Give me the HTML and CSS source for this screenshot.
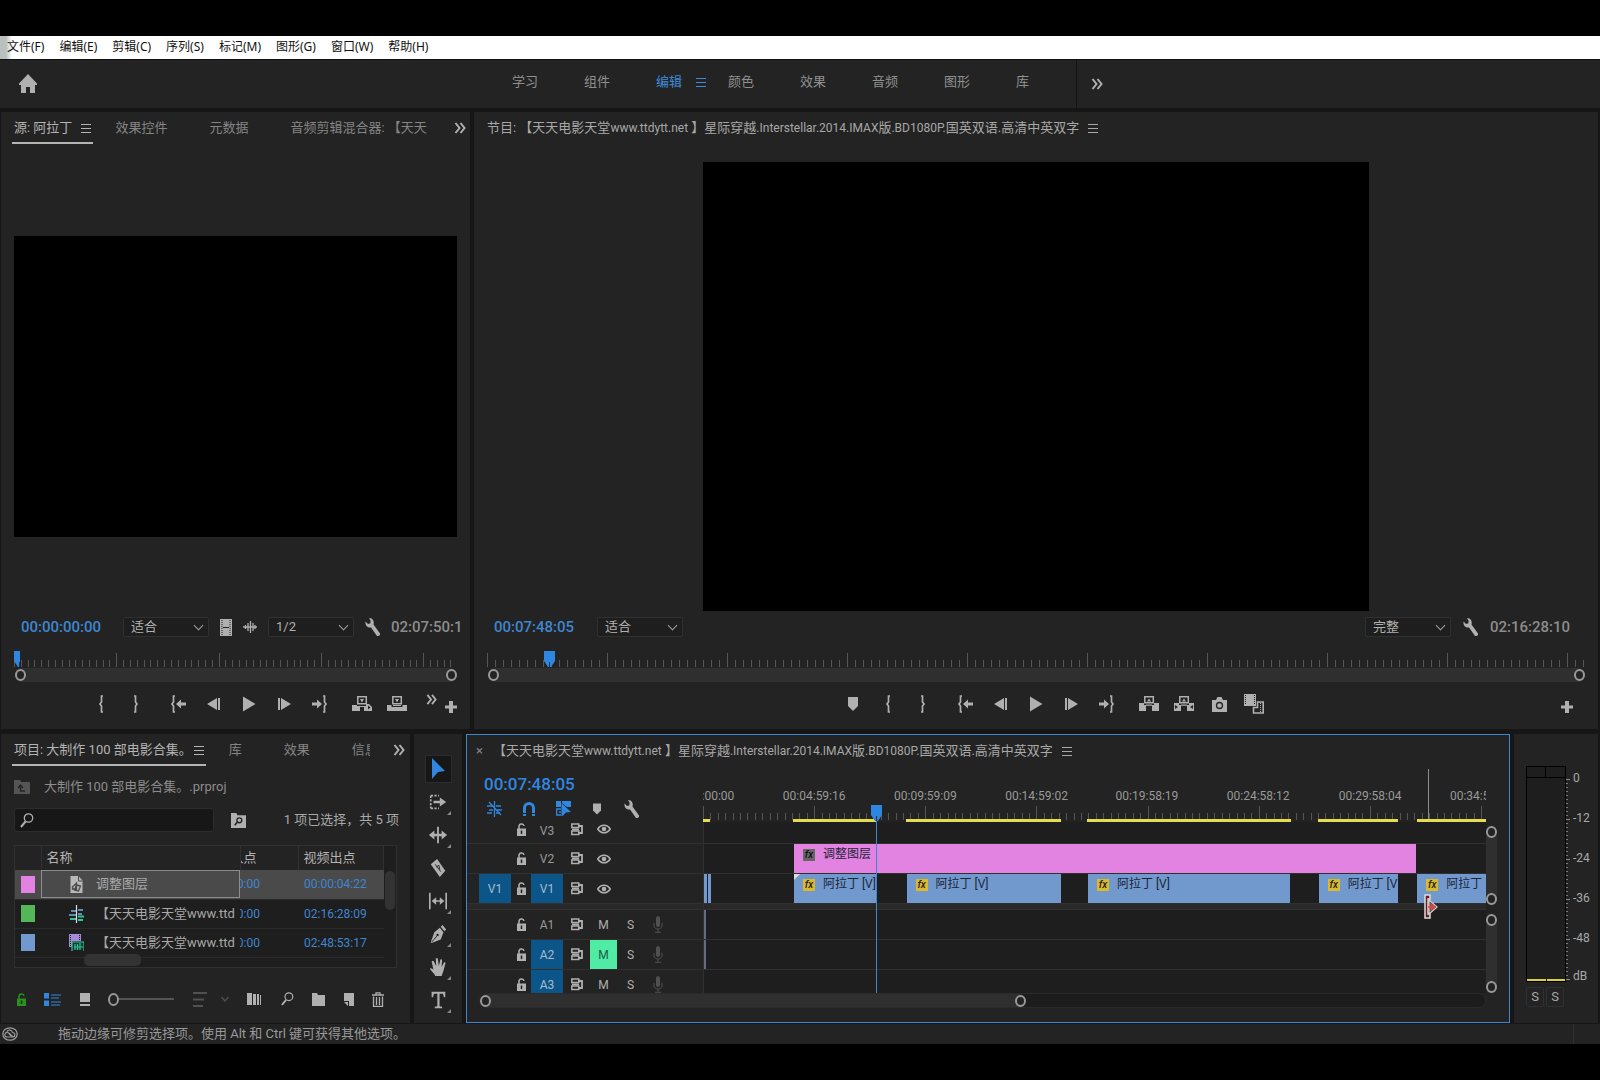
FILE: index.html
```
<!DOCTYPE html>
<html lang="zh-CN">
<head>
  <meta charset="UTF-8">
  <title>Premiere Pro</title>
  <link rel="stylesheet" href="styles.css">
</head>
<body>
<svg class="sprite" aria-hidden="true">
  <symbol id="i-menu" viewBox="0 0 10 11"><path d="M0 1.5h10M0 5.5h10M0 9.5h10" stroke="currentColor"/></symbol>
  <symbol id="i-more" viewBox="0 0 12 12"><path d="M1.5 1l4 5-4 5M6.500 1l4 5-4 5" fill="none" stroke="currentColor" stroke-width="2"/></symbol>
  <symbol id="i-home" viewBox="0 0 18 20"><path d="M9 0l9 9.500v1.500h-2v8h-5v-6H7v6H2v-8H0V9.500z" fill="currentColor"/></symbol>
  <symbol id="i-film" viewBox="0 0 12 17"><path d="M0 0h12v17H0z" fill="currentColor"/><path d="M2 1v15M10 1v15" stroke="#222" stroke-dasharray="1 1"/><path d="M3 8.500h6" stroke="#222"/></symbol>
  <symbol id="i-wave" viewBox="0 0 14 12"><path d="M0 6h14M2.500 4v4M5 2v8M7.500 0v12M10 2v8M12 4v4" stroke="currentColor" stroke-width="1.300"/></symbol>
  <symbol id="i-wrench" viewBox="0 0 15 18"><path d="M4 0C8 0 9.500 3.500 8.500 6.500L15 15.500V17l-1.500 1H12L6 9.500C2 10 0 7 .5 3.500L3 6l2.500-.8V2.500z" fill="currentColor"/></symbol>
  <symbol id="i-in" viewBox="0 0 18 18"><path d="M11 1H9.500v6L8 9l1.500 2v6H11" fill="none" stroke="currentColor" stroke-width="1.700"/></symbol>
  <symbol id="i-out" viewBox="0 0 18 18"><path d="M7 1h1.500v6L10 9l-1.500 2v6H7" fill="none" stroke="currentColor" stroke-width="1.700"/></symbol>
  <symbol id="i-goin" viewBox="0 0 18 18"><path d="M5 1H3.500v6L2 9l1.500 2v6H5" fill="none" stroke="currentColor" stroke-width="1.700"/><path d="M6 9l5-4.500V7.500h5v3h-5v3z" fill="currentColor"/></symbol>
  <symbol id="i-goout" viewBox="0 0 18 18"><path d="M13 1h1.500v6L16 9l-1.500 2v6H13" fill="none" stroke="currentColor" stroke-width="1.700"/><path d="M12 9L7 4.500V7.500H2v3h5v3z" fill="currentColor"/></symbol>
  <symbol id="i-back" viewBox="0 0 18 18"><path d="M12 3v12L2 9zM13 3h2v12h-2z" fill="currentColor"/></symbol>
  <symbol id="i-fwd" viewBox="0 0 18 18"><path d="M6 3v12l10-6zM3 3h2v12H3z" fill="currentColor"/></symbol>
  <symbol id="i-play" viewBox="0 0 18 18"><path d="M3 1.500v15L15.500 9z" fill="currentColor"/></symbol>
  <symbol id="i-marker" viewBox="0 0 10 14"><path d="M0 0h10v9l-5 5-5-5z" fill="currentColor"/></symbol>
  <symbol id="i-insert" viewBox="0 0 20 16"><path d="M5.800.8h8.500v7H5.800z" fill="none" stroke="currentColor" stroke-width="1.500"/><path d="M8 3h4l-2 3.500zM0 9h5v1h3v5H0zM12 10h2V8h3l3 3v4h-8z" fill="currentColor"/><path d="M16 9.500v4l2.500-2z" fill="#232323"/><path d="M7 10.500h6" stroke="currentColor"/></symbol>
  <symbol id="i-overwrite" viewBox="0 0 20 16"><path d="M5.800.8h8.500v7H5.800z" fill="none" stroke="currentColor" stroke-width="1.500"/><path d="M8 3h4l-2 3.500zM0 9h4.500v2h11V9H20v6H0zM6 9h8v1H6z" fill="currentColor"/></symbol>
  <symbol id="i-lift" viewBox="0 0 20 16"><path d="M5.800.8h8.500v6H5.800z" fill="none" stroke="currentColor" stroke-width="1.500"/><path d="M8 5.500h4L10 2.500zM0 7h5v2h2v6H0zM13 9h2V7h5v8h-7zM7 8.500h6v1.200H7z" fill="currentColor"/></symbol>
  <symbol id="i-extract" viewBox="0 0 20 16"><path d="M5.800.8h8.500v6H5.800z" fill="none" stroke="currentColor" stroke-width="1.500"/><path d="M8 5.500h4L10 2.500zM0 7h5v2h2v6H0zM13 9h2V7h5v8h-7zM7 8.500h6v1.200H7z" fill="currentColor"/><path d="M1 9v4l3-2zM19 9v4l-3-2z" fill="#232323"/></symbol>
  <symbol id="i-camera" viewBox="0 0 15 15"><path d="M0 3h4l1.500-3h4L11 3h4v12H0z" fill="currentColor"/><circle cx="7.500" cy="8.500" r="3" fill="none" stroke="#232323" stroke-width="1.300"/></symbol>
  <symbol id="i-compare" viewBox="0 0 20 20"><path d="M0 0h12v12H0z" fill="currentColor"/><path d="M1.500 1v10M10.500 1v10" stroke="#232323" stroke-dasharray="1 1"/><path d="M13.500 8h5.700v11H9.500v-5.500h4z" fill="none" stroke="currentColor" stroke-width="1.600"/><path d="M16.500 9v9" stroke="currentColor" stroke-dasharray="1 1"/></symbol>
  <symbol id="i-plus" viewBox="0 0 12 14"><path d="M4 1h4v4.500h4v3H8V13H4V8.500H0v-3h4z" fill="currentColor"/></symbol>
  <symbol id="i-upfolder" viewBox="0 0 16 14"><path d="M0 0h6l1 2h9v12H0z" fill="currentColor"/><path d="M4 8l2.500-3L9 8M6.500 6v5H11" fill="none" stroke="#232323" stroke-width="1.400"/></symbol>
  <symbol id="i-search" viewBox="0 0 14 15"><circle cx="8.500" cy="5" r="4.200" fill="none" stroke="currentColor" stroke-width="1.300"/><path d="M5.500 8.500L1 14" stroke="currentColor" stroke-width="2"/></symbol>
  <symbol id="i-findbin" viewBox="0 0 14 14"><path d="M0 0h5l1 2h8v12H0z" fill="currentColor"/><circle cx="7.800" cy="6.800" r="2.300" fill="none" stroke="#232323" stroke-width="1.200"/><path d="M6 8.500L3.500 11.500" stroke="#232323" stroke-width="1.500"/></symbol>
  <symbol id="i-adjust" viewBox="0 0 12 17"><path d="M0 0h8l4 4.500V17H0z" fill="currentColor"/><path d="M8 0v5h4" fill="none" stroke="#4a4a4a"/><path d="M2 11l4-4v6H2zM6 9l4 1-2 5-4-1z" fill="none" stroke="#4a4a4a" stroke-width="1.300"/></symbol>
  <symbol id="i-sequence" viewBox="0 0 15 18"><path d="M2 6h5M0 10h7M9 5h5M9 9h4" stroke="#5b8fb5" stroke-width="2"/><path d="M9 11.500h6M9 15h5M1 14h6" stroke="#36c29a" stroke-width="2"/><path d="M7.500 0v18" stroke="#ddd" stroke-width="1.200"/></symbol>
  <symbol id="i-media" viewBox="0 0 15 17"><path d="M0 0h12v13H0z" fill="#a48ad8"/><path d="M1.500 1v12M10.500 1v6" stroke="#222" stroke-dasharray="1 1"/><path d="M3 7h12v9H3z" fill="#17392c"/><path d="M3 17V8h12v9M5 13h9M6 10v6M8.500 10v6M11 9v7" fill="none" stroke="#36c29a" stroke-width="1.200"/></symbol>
  <symbol id="i-lock" viewBox="0 0 9 13"><path d="M0 5.500h9V13H0z" fill="currentColor"/><path d="M2 6V3.500C2 .5 6.500 0 7 3" fill="none" stroke="currentColor" stroke-width="1.500"/><path d="M4.500 7.500v3.500" stroke="#222" stroke-width="1.500"/></symbol>
  <symbol id="i-list" viewBox="0 0 17 13"><path d="M0 0h5v5.500H0zM0 7.500h5V13H0z" fill="currentColor"/><path d="M7 2h10M7 5h8M7 9h10M7 12h9" stroke="currentColor" stroke-width="1.200"/></symbol>
  <symbol id="i-icons" viewBox="0 0 10 13"><path d="M0 0h10v9H0zM0 11h10v2H0z" fill="currentColor"/></symbol>
  <symbol id="i-sort" viewBox="0 0 14 15"><path d="M0 1h14M0 7.500h11M0 14h10" stroke="currentColor" stroke-width="1.800"/></symbol>
  <symbol id="i-down" viewBox="0 0 8 6"><path d="M.5 1L4 5l3.500-4" fill="none" stroke="currentColor" stroke-width="1.300"/></symbol>
  <symbol id="i-auto" viewBox="0 0 15 12"><path d="M0 0h5v12H0zM6 1h3v11H6zM10 1h2v11h-2zM13 2h1v10h-1z" fill="currentColor"/></symbol>
  <symbol id="i-folder" viewBox="0 0 13 13"><path d="M0 0h5l1 2h7v11H0z" fill="currentColor"/></symbol>
  <symbol id="i-new" viewBox="0 0 10 13"><path d="M0 0h10v13H5V8H0z" fill="currentColor"/><path d="M0 9h4v4z" fill="currentColor"/></symbol>
  <symbol id="i-trash" viewBox="0 0 12 15"><path d="M0 3h12M4 2.500V.8h4v1.700" fill="none" stroke="currentColor" stroke-width="1.300"/><path d="M1.500 4.500v9.800h9V4.500M4.500 5v8M7.500 5v8" fill="none" stroke="currentColor" stroke-width="1.300"/></symbol>
  <symbol id="i-select" viewBox="0 0 20 22"><path d="M4 0l13 13-7 1-6 7z" fill="currentColor"/></symbol>
  <symbol id="i-trackfwd" viewBox="0 0 20 22"><path d="M2 4h9M2 18h9M2 4v14" fill="none" stroke="currentColor" stroke-width="1.800" stroke-dasharray="2.500 1.500"/><path d="M5 9.500h7V6l7 5-7 5v-3.500H5z" fill="currentColor"/></symbol>
  <symbol id="i-ripple" viewBox="0 0 20 22"><path d="M9 2h2v18H9z" fill="currentColor"/><path d="M0 11l6-5v3.500h8V6l6 5-6 5v-3.500H6V16z" fill="currentColor"/></symbol>
  <symbol id="i-razor" viewBox="0 0 20 22"><path d="M2 7l7-6 9 13-6 7z" fill="currentColor"/><path d="M7 7l6 8M8 10l3-2 1 5" stroke="#232323" stroke-width="1" fill="none"/></symbol>
  <symbol id="i-slip" viewBox="0 0 20 22"><path d="M1 2v18M19 2v18M5 11h10" stroke="currentColor" stroke-width="1.800"/><path d="M3 11l5-4v8zM17 11l-5-4v8z" fill="currentColor"/></symbol>
  <symbol id="i-pen" viewBox="0 0 20 22"><path d="M12 4l4 5-3 8-10 4-1-1L6 9zM13 3l2-2 4 5-2 2z" fill="currentColor"/><path d="M3 20l6-7" stroke="#232323"/><circle cx="9.500" cy="12" r="1.300" fill="#232323"/></symbol>
  <symbol id="i-hand" viewBox="0 0 20 22"><path d="M7 21c-1-3-4-5-6-8 1-1.500 3 0 4 1L3 5c1-1.500 2-1 2.500 0L8 10 7.500 2c1-1.500 2-1 2.300 0L11 10l1.500-7c1-1 2-.5 2 .5L14 11l2.500-5c1-.7 2 0 1.700 1L16 15l-2 6z" fill="currentColor"/></symbol>
  <symbol id="i-type" viewBox="0 0 20 22"><path d="M3 2h15v6h-1.500l-1-4H11.700v14l2.800.5V20h-8v-1.500l2.800-.5V4H5.500l-1 4H3z" fill="currentColor"/></symbol>
  <symbol id="i-nest" viewBox="0 0 16 16"><path d="M0 5h6M2 9h4M0 12h5M9 5h5M10 9h5M9 12h4" stroke="currentColor" stroke-width="1.700"/><path d="M7.500 0v16M2 1l12 13" stroke="currentColor" stroke-width="1.300"/></symbol>
  <symbol id="i-magnet" viewBox="0 0 12 14"><path d="M1.500 14V6c0-6 9-6 9 0v8" fill="none" stroke="currentColor" stroke-width="3"/><path d="M0 11.500h4M8 11.500h4" stroke="#232323"/></symbol>
  <symbol id="i-linked" viewBox="0 0 15 15"><path d="M0 0h5v6H0zM6 0h9v6h-4L6 2z" fill="currentColor"/><path d="M5 8H.7v6H5M3 11h2" fill="none" stroke="currentColor" stroke-width="1.300"/><path d="M5.500 2L15 11l-5 .5L5.500 16z" fill="currentColor"/></symbol>
  <symbol id="i-sync" viewBox="0 0 12 13"><path d="M.8 1h7v3.500h-7zM.8 8h7v3.500h-7z" fill="none" stroke="currentColor" stroke-width="1.500"/><path d="M7 3h4v7H7M1 6.300h7" fill="none" stroke="currentColor" stroke-width="1.800"/></symbol>
  <symbol id="i-eye" viewBox="0 0 14 10"><path d="M.8 5C4 0 10 0 13.200 5 10 10 4 10 .8 5z" fill="none" stroke="currentColor" stroke-width="1.700"/><circle cx="7" cy="5" r="2.300" fill="currentColor"/></symbol>
  <symbol id="i-mic" viewBox="0 0 10 17"><path d="M3 2c0-2.500 4-2.500 4 0v7c0 2.500-4 2.500-4 0z" fill="currentColor"/><path d="M1 7v3c0 4 8 4 8 0V7M5 13v3M2 16.300h6" fill="none" stroke="currentColor"/></symbol>
  <symbol id="i-cc" viewBox="0 0 16 14"><ellipse cx="8" cy="7" rx="7.200" ry="6.200" fill="none" stroke="currentColor" stroke-width="1.300"/><path d="M11 10H5.500c-4 0-3-5 0-4.500 1.500.2 2 2 3.500 3.500M5 5c1-3 5-2 5.500.5 3 0 3 4 .5 4.500L7 6" fill="none" stroke="currentColor" stroke-width="1.200"/></symbol>
  <symbol id="i-head" viewBox="0 0 11 16"><path d="M0 0h11v10l-4 6H4l-4-6z" fill="#2f86e0"/><path d="M5.500 11v5" stroke="#16324f"/></symbol>
</svg>

<nav class="menubar">
  <a href="#">文件(F)</a>
  <a href="#">编辑(E)</a>
  <a href="#">剪辑(C)</a>
  <a href="#">序列(S)</a>
  <a href="#">标记(M)</a>
  <a href="#">图形(G)</a>
  <a href="#">窗口(W)</a>
  <a href="#">帮助(H)</a>
</nav>

<header class="workspaces">
  <button class="home" aria-label="主页"><svg width="18" height="20"><use href="#i-home"/></svg></button>
  <nav class="workspace-tabs">
    <button>学习</button>
    <button>组件</button>
    <button class="active">编辑 <svg width="10" height="11"><use href="#i-menu"/></svg></button>
    <button>颜色</button>
    <button>效果</button>
    <button>音频</button>
    <button>图形</button>
    <button>库</button>
  </nav>
  <button class="overflow" aria-label="更多工作区"><svg width="12" height="12"><use href="#i-more"/></svg></button>
</header>

<main>
  <div class="row monitors">
    <section class="panel monitor source">
      <div class="tabs">
        <button class="tab active">源: 阿拉丁 <svg width="10" height="11"><use href="#i-menu"/></svg></button>
        <button class="tab">效果控件</button>
        <button class="tab">元数据</button>
        <button class="tab clipped">音频剪辑混合器: 【天天</button>
        <button class="more" aria-label="更多"><svg width="12" height="12"><use href="#i-more"/></svg></button>
      </div>
      <div class="preview"><div class="video"></div></div>
      <div class="controls">
        <span class="timecode">00:00:00:00</span>
        <span class="select"><select aria-label="缩放级别"><option>适合</option></select></span>
        <svg width="12" height="17"><use href="#i-film"/></svg>
        <svg width="14" height="12"><use href="#i-wave"/></svg>
        <span class="select"><select aria-label="回放分辨率"><option>1/2</option></select></span>
        <svg width="15" height="18"><use href="#i-wrench"/></svg>
        <span class="duration">02:07:50:1</span>
      </div>
      <div class="scrub">
        <svg class="ruler" data-step="6.820"></svg>
        <svg class="playhead" width="11" height="16" style="left: 0"><use href="#i-head"/></svg>
      </div>
      <div class="zoombar"><i></i><i></i></div>
      <div class="transport">
        <div class="buttons">
          <div>
            <button aria-label="标记入点"><svg width="18" height="18"><use href="#i-in"/></svg></button>
            <button aria-label="标记出点"><svg width="18" height="18"><use href="#i-out"/></svg></button>
          </div>
          <div>
            <button aria-label="转到入点"><svg width="18" height="18"><use href="#i-goin"/></svg></button>
            <button aria-label="后退一帧"><svg width="18" height="18"><use href="#i-back"/></svg></button>
            <button aria-label="播放"><svg width="18" height="18"><use href="#i-play"/></svg></button>
            <button aria-label="前进一帧"><svg width="18" height="18"><use href="#i-fwd"/></svg></button>
            <button aria-label="转到出点"><svg width="18" height="18"><use href="#i-goout"/></svg></button>
          </div>
          <div>
            <button aria-label="插入"><svg width="20" height="16"><use href="#i-insert"/></svg></button>
            <button aria-label="覆盖"><svg width="20" height="16"><use href="#i-overwrite"/></svg></button>
          </div>
        </div>
        <div class="extra">
          <button aria-label="更多按钮"><svg width="11" height="11"><use href="#i-more"/></svg></button>
          <button class="add" aria-label="按钮编辑器"><svg width="12" height="14"><use href="#i-plus"/></svg></button>
        </div>
      </div>
    </section>

    <section class="panel monitor program">
      <div class="tabs">
        <button class="tab title"><span>节目: 【天天电影天堂<small>www.ttdytt.net</small> 】星际穿越<small>.Interstellar.2014.IMAX</small>版<small>.BD1080P.</small>国英双语.高清中英双字</span><svg width="10" height="11"><use href="#i-menu"/></svg></button>
      </div>
      <div class="preview"><div class="video"></div></div>
      <div class="controls">
        <span class="timecode">00:07:48:05</span>
        <span class="select"><select aria-label="缩放级别"><option>适合</option></select></span>
        <span class="select push"><select aria-label="回放分辨率"><option>完整</option></select></span>
        <svg width="15" height="18"><use href="#i-wrench"/></svg>
        <span class="duration">02:16:28:10</span>
      </div>
      <div class="scrub">
        <svg class="ruler" data-step="8"></svg>
        <svg class="playhead" width="11" height="16" style="left: 5.200%"><use href="#i-head"/></svg>
      </div>
      <div class="zoombar"><i></i><i></i></div>
      <div class="transport">
        <div class="buttons">
          <div>
            <button aria-label="添加标记"><svg width="10" height="14"><use href="#i-marker"/></svg></button>
            <button aria-label="标记入点"><svg width="18" height="18"><use href="#i-in"/></svg></button>
            <button aria-label="标记出点"><svg width="18" height="18"><use href="#i-out"/></svg></button>
          </div>
          <div>
            <button aria-label="转到入点"><svg width="18" height="18"><use href="#i-goin"/></svg></button>
            <button aria-label="后退一帧"><svg width="18" height="18"><use href="#i-back"/></svg></button>
            <button aria-label="播放"><svg width="18" height="18"><use href="#i-play"/></svg></button>
            <button aria-label="前进一帧"><svg width="18" height="18"><use href="#i-fwd"/></svg></button>
            <button aria-label="转到出点"><svg width="18" height="18"><use href="#i-goout"/></svg></button>
          </div>
          <div>
            <button aria-label="提升"><svg width="20" height="16"><use href="#i-lift"/></svg></button>
            <button aria-label="提取"><svg width="20" height="16"><use href="#i-extract"/></svg></button>
            <button aria-label="导出帧"><svg width="15" height="15"><use href="#i-camera"/></svg></button>
            <button aria-label="比较视图"><svg width="20" height="20"><use href="#i-compare"/></svg></button>
          </div>
        </div>
        <div class="extra">
          <button class="add" aria-label="按钮编辑器"><svg width="12" height="14"><use href="#i-plus"/></svg></button>
        </div>
      </div>
    </section>
  </div>

  <div class="row editing">
    <section class="panel project">
      <div class="tabs">
        <button class="tab active">项目: 大制作 100 部电影合集。<svg width="10" height="11"><use href="#i-menu"/></svg></button>
        <button class="tab">库</button>
        <button class="tab">效果</button>
        <button class="tab clipped">信息</button>
        <button class="more" aria-label="更多"><svg width="12" height="12"><use href="#i-more"/></svg></button>
      </div>
      <div class="path"><svg width="16" height="14"><use href="#i-upfolder"/></svg>大制作 100 部电影合集。.prproj</div>
      <div class="filter">
        <label class="search">
          <svg width="14" height="15"><use href="#i-search"/></svg>
          <input type="text" aria-label="搜索">
        </label>
        <button aria-label="从查询创建新的搜索素材箱"><svg width="15" height="15"><use href="#i-findbin"/></svg></button>
        <span>1 项已选择，共 5 项</span>
      </div>
      <div class="bin">
        <table>
          <thead>
            <tr><th class="label"></th><th class="name">名称</th><th class="in"><div>入点</div></th><th>视频出点</th></tr>
          </thead>
          <tbody>
            <tr class="selected">
              <td><span class="swatch pink"></span></td>
              <td class="name"><div><svg width="15" height="17"><use href="#i-adjust"/></svg>调整图层</div></td>
              <td class="in"><div>00:00</div></td>
              <td class="tc">00:00:04:22</td>
            </tr>
            <tr>
              <td><span class="swatch green"></span></td>
              <td class="name"><div><svg width="15" height="18"><use href="#i-sequence"/></svg>【天天电影天堂www.ttd</div></td>
              <td class="in"><div>00:00</div></td>
              <td class="tc">02:16:28:09</td>
            </tr>
            <tr>
              <td><span class="swatch blue"></span></td>
              <td class="name"><div><svg width="15" height="17"><use href="#i-media"/></svg>【天天电影天堂www.ttd</div></td>
              <td class="in"><div>00:00</div></td>
              <td class="tc">02:48:53:17</td>
            </tr>
          </tbody>
        </table>
        <span class="vthumb"></span>
        <span class="hthumb"></span>
      </div>
      <div class="project-tools">
        <button class="lock" aria-label="可写"><svg width="9" height="13"><use href="#i-lock"/></svg></button>
        <button class="on" aria-label="列表视图"><svg width="17" height="13"><use href="#i-list"/></svg></button>
        <button aria-label="图标视图"><svg width="10" height="13"><use href="#i-icons"/></svg></button>
        <input type="range" min="0" max="100" value="0" aria-label="缩略图大小">
        <button class="dim" aria-label="排序"><svg width="14" height="15"><use href="#i-sort"/></svg><svg width="8" height="6"><use href="#i-down"/></svg></button>
        <button aria-label="自动匹配序列"><svg width="15" height="12"><use href="#i-auto"/></svg></button>
        <button aria-label="查找"><svg width="13" height="14"><use href="#i-search"/></svg></button>
        <button aria-label="新建素材箱"><svg width="13" height="13"><use href="#i-folder"/></svg></button>
        <button aria-label="新建项"><svg width="10" height="13"><use href="#i-new"/></svg></button>
        <button aria-label="清除"><svg width="12" height="15"><use href="#i-trash"/></svg></button>
      </div>
    </section>

    <section class="panel tools">
      <button class="active" aria-label="选择工具"><svg width="20" height="22"><use href="#i-select"/></svg></button>
      <button class="group" aria-label="向前选择轨道工具"><svg width="20" height="20"><use href="#i-trackfwd"/></svg></button>
      <button class="group" aria-label="波纹编辑工具"><svg width="20" height="20"><use href="#i-ripple"/></svg></button>
      <button aria-label="剃刀工具"><svg width="20" height="20"><use href="#i-razor"/></svg></button>
      <button class="group" aria-label="外滑工具"><svg width="20" height="20"><use href="#i-slip"/></svg></button>
      <button class="group" aria-label="钢笔工具"><svg width="20" height="20"><use href="#i-pen"/></svg></button>
      <button class="group" aria-label="手形工具"><svg width="20" height="20"><use href="#i-hand"/></svg></button>
      <button class="group" aria-label="文字工具"><svg width="20" height="20"><use href="#i-type"/></svg></button>
    </section>

    <section class="panel timeline">
      <div class="tabs">
        <button class="close" aria-label="关闭">×</button>
        <button class="tab title"><span>【天天电影天堂<small>www.ttdytt.net</small> 】星际穿越<small>.Interstellar.2014.IMAX</small>版<small>.BD1080P.</small>国英双语.高清中英双字</span><svg width="10" height="11"><use href="#i-menu"/></svg></button>
      </div>
      <div class="tracks">
        <div class="track-head">
          <span class="timecode">00:07:48:05</span>
          <div class="switches">
            <button class="on" aria-label="嵌套"><svg width="16" height="16"><use href="#i-nest"/></svg></button>
            <button class="on" aria-label="对齐"><svg width="12" height="14"><use href="#i-magnet"/></svg></button>
            <button class="on" aria-label="链接选择项"><svg width="15" height="15"><use href="#i-linked"/></svg></button>
            <button aria-label="添加标记"><svg width="8" height="12"><use href="#i-marker"/></svg></button>
            <button aria-label="时间轴显示设置"><svg width="15" height="18"><use href="#i-wrench"/></svg></button>
          </div>
        </div>
        <div class="time-ruler">
          <svg class="ruler" data-step="7.410"></svg>
          <span style="left: 0%">00:00:00:00</span>
          <span style="left: 14.200%">00:04:59:16</span>
          <span style="left: 28.400%">00:09:59:09</span>
          <span style="left: 42.600%">00:14:59:02</span>
          <span style="left: 56.700%">00:19:58:19</span>
          <span style="left: 70.900%">00:24:58:12</span>
          <span style="left: 85.200%">00:29:58:04</span>
          <span style="left: 99.400%">00:34:57:22</span>
          <i class="render" style="left: 0%; width: 0.900%"></i>
          <i class="render" style="left: 11.500%; width: 10.600%"></i>
          <i class="render" style="left: 25.900%; width: 19.800%"></i>
          <i class="render" style="left: 49.100%; width: 26%"></i>
          <i class="render" style="left: 78.600%; width: 10.200%"></i>
          <i class="render" style="left: 91.200%; width: 8.800%"></i>
          <i class="hover" style="left: 92.600%"></i>
        </div>
        <div class="heads">
          <div class="head partial">
            <span></span><svg width="9" height="13"><use href="#i-lock"/></svg><b>V3</b><svg width="12" height="13"><use href="#i-sync"/></svg><svg width="14" height="10"><use href="#i-eye"/></svg>
          </div>
          <div class="head">
            <span></span><svg width="9" height="13"><use href="#i-lock"/></svg><b>V2</b><svg width="12" height="13"><use href="#i-sync"/></svg><svg width="14" height="10"><use href="#i-eye"/></svg>
          </div>
          <div class="head">
            <b class="on">V1</b><svg width="9" height="13"><use href="#i-lock"/></svg><b class="on">V1</b><svg width="12" height="13"><use href="#i-sync"/></svg><svg width="14" height="10"><use href="#i-eye"/></svg>
          </div>
          <div class="split"></div>
          <div class="head">
            <span></span><svg width="9" height="13"><use href="#i-lock"/></svg><b>A1</b><svg width="12" height="13"><use href="#i-sync"/></svg><button>M</button><button>S</button><svg class="mic" width="10" height="17"><use href="#i-mic"/></svg>
          </div>
          <div class="head">
            <span></span><svg width="9" height="13"><use href="#i-lock"/></svg><b class="on">A2</b><svg width="12" height="13"><use href="#i-sync"/></svg><button class="muted">M</button><button>S</button><svg class="mic" width="10" height="17"><use href="#i-mic"/></svg>
          </div>
          <div class="head cut">
            <span></span><svg width="9" height="13"><use href="#i-lock"/></svg><b class="on">A3</b><svg width="12" height="13"><use href="#i-sync"/></svg><button>M</button><button>S</button><svg class="mic" width="10" height="17"><use href="#i-mic"/></svg>
          </div>
        </div>
        <div class="lanes">
          <div class="lane partial"></div>
          <div class="lane">
            <div class="clip pink" style="left: 11.500%; width: 79.600%"><em>fx</em>调整图层</div>
          </div>
          <div class="lane">
            <div class="clip sliver" style="left: 0%; width: 0.900%"></div>
            <div class="clip fade" style="left: 11.500%; width: 10.500%"><em>fx</em>阿拉丁 [V]</div>
            <div class="clip" style="left: 25.900%; width: 19.700%"><em>fx</em>阿拉丁 [V]</div>
            <div class="clip" style="left: 49.100%; width: 25.900%"><em>fx</em>阿拉丁 [V]</div>
            <div class="clip" style="left: 78.600%; width: 10.100%"><em>fx</em>阿拉丁 [V</div>
            <div class="clip" style="left: 91.200%; width: 8.800%"><em>fx</em>阿拉丁</div>
          </div>
          <div class="split"></div>
          <div class="lane"><div class="clip audio" style="left: 0%; width: 0.300%"></div></div>
          <div class="lane"><div class="clip audio" style="left: 0%; width: 0.300%"></div></div>
          <div class="lane cut"></div>
        </div>
        <div class="vbars">
          <div class="vbar"><i></i><i></i></div>
          <div class="vbar"><i></i><i></i></div>
        </div>
        <div class="overlay">
          <div class="playline" style="left: 22%"><svg width="11" height="16"><use href="#i-head"/></svg></div>
          <svg class="cursor" width="16" height="28" viewBox="0 0 16 28" style="left: 92%"><path d="M2 2h5v4H5v15h2v4H2z" fill="#6b1d1d" stroke="#ddd" stroke-width="1.500"/><path d="M6 7l8 7-8 7z" fill="#333" stroke="#ccc" stroke-width="1.300"/><path d="M5 14h6M8 11l4 3-4 3z" stroke="#d34a4a" fill="#d34a4a" stroke-width="1.500"/></svg>
        </div>
      </div>
      <div class="hbar"><div style="width: 54.300%"><i></i><i></i></div></div>
    </section>

    <section class="panel meters">
      <div class="meter"><i></i><i></i></div>
      <div class="scale">
        <span>0</span><span>-12</span><span>-24</span><span>-36</span><span>-48</span><span>dB</span>
      </div>
      <div class="solo"><button>S</button><button>S</button></div>
    </section>
  </div>
</main>

<footer class="status">
  <svg width="16" height="14"><use href="#i-cc"/></svg>
  <span>拖动边缘可修剪选择项。使用 Alt 和 Ctrl 键可获得其他选项。</span>
</footer>

<script>
  // draw the ruler ticks, one long tick in every fifteen
  document.querySelectorAll('.ruler').forEach(ruler => {
    const width = ruler.clientWidth;
    const height = ruler.clientHeight;
    const step = Number(ruler.dataset.step);
    let d = '';
    for (let i = 0; i * step < width; i++) {
      const x = Math.round(i * step) + 0.5;
      d += 'M' + x + ' ' + height + 'v' + (i % 15 === 0 ? -14 : -7);
    }
    const path = document.createElementNS('http://www.w3.org/2000/svg', 'path');
    path.setAttribute('d', d);
    path.setAttribute('stroke', '#555');
    ruler.appendChild(path);
  });
</script>
</body>
</html>
```
FILE: styles.css
```
* {
  box-sizing: border-box;
}

body {
  margin: 0;
  padding: 36px 0;
  min-height: 100vh;
  display: flex;
  flex-direction: column;
  background: #000;
  color: #a8a8a8;
  font-family: Roboto, "Noto Sans CJK SC", sans-serif;
  font-size: 13px;
  line-height: 18px;
}

button, input, select {
  font: inherit;
  color: inherit;
  background: none;
  border: 0;
  padding: 0;
  margin: 0;
}

button {
  display: flex;
  align-items: center;
  justify-content: center;
  white-space: nowrap;
}

svg {
  display: block;
  flex: none;
}

.sprite {
  position: absolute;
  width: 0;
  height: 0;
}

/* menu and workspaces */

.menubar {
  display: flex;
  align-items: center;
  gap: 15px;
  height: 23px;
  padding: 0 0 2px 7px;
  background: linear-gradient(90deg, #b9c0bd 6px, #fff 12px);
  font-family: "Noto Sans", "Noto Sans CJK SC", sans-serif;
  font-size: 12px;
}

.menubar a {
  color: #111;
  text-decoration: none;
}

.workspaces {
  display: grid;
  grid-template-columns: 1fr auto 1fr;
  align-items: center;
  height: 49px;
  padding: 0 11px 2px 0;
  background: #232323;
  border-top: 1px solid #111;
  color: #8f8f8f;
}

.home {
  justify-self: start;
  margin-left: 19px;
  color: #b0b0b0;
}

.workspace-tabs {
  display: flex;
  border-right: 1px solid #141414;
  height: 48px;
}

.workspace-tabs button {
  width: 72px;
  justify-content: flex-start;
  gap: 14px;
  padding-bottom: 4px;
}

.workspace-tabs button:last-child {
  width: 60px;
}

.workspace-tabs .active {
  color: #3f8ad8;
}

.overflow {
  justify-self: start;
  margin-left: 14px;
  color: #b0b0b0;
}

/* panels */

main {
  flex: 1;
  display: flex;
  flex-direction: column;
  gap: 5px;
  padding: 4px 2px 1px 1px;
  background: #161616;
}

.row {
  display: grid;
  gap: 4px;
}

.monitors {
  flex: 1;
  grid-template-columns: minmax(0, 469fr) minmax(0, 1124fr);
}

.editing {
  grid-template-columns: minmax(0, 409fr) 48px minmax(0, 1044fr) 84px;
}

.panel {
  background: #232323;
  min-width: 0;
}

.tabs {
  display: flex;
  align-items: center;
  height: 32px;
  color: #858585;
}

.tab {
  height: 32px;
}

.tab svg {
  margin-left: 9px;
}

.tab.title {
  color: #a8a8a8;
}

.tab small {
  font-size: 12px;
}

.tab.active {
  color: #b4b4b4;
  border-bottom: 2px solid #b4b4b4;
  padding: 2px 2px 0;
}

.tab.clipped {
  overflow: hidden;
  justify-content: flex-start;
}

.more {
  margin-left: auto;
  color: #b0b0b0;
}

/* monitors */

.monitor {
  display: flex;
  flex-direction: column;
  padding-bottom: 3px;
}

.monitor .tabs {
  padding: 0 4px 0 11px;
  margin-bottom: 18px;
}

.program .tabs {
  padding-left: 13px;
}

.source .tab + .tab {
  margin-left: 22px;
}

.source .tab:nth-child(3), .source .tab.clipped {
  margin-left: 42px;
}

.preview {
  flex: 1;
  min-height: 0;
  display: flex;
  justify-content: center;
  align-items: center;
  padding: 0 13px;
}

.video {
  background: #000;
}

.source .video {
  width: 100%;
  aspect-ratio: 443 / 301;
}

.program .video {
  height: 449px;
  aspect-ratio: 666 / 449;
}

.controls {
  display: flex;
  align-items: center;
  gap: 12px;
  height: 30px;
  margin-top: 1px;
  padding: 0 13px 0 20px;
  color: #b0b0b0;
}

.source .controls {
  gap: 11px;
  padding-right: 4px;
}

.program .controls {
  padding-right: 28px;
}

.timecode {
  flex: none;
  width: 91px;
  font-size: 15px;
  font-weight: 500;
  color: #3f86d0;
}

.duration {
  font-size: 15px;
  font-weight: 500;
  color: #8c8c8c;
}

.push {
  margin-left: auto;
}

.select {
  position: relative;
  flex: none;
}

.select select {
  display: block;
  appearance: none;
  width: 86px;
  height: 20px;
  padding-left: 7px;
  background: #1e1e1e;
  border: 1px solid #303030;
  border-radius: 2px;
}

.select::after {
  content: "";
  position: absolute;
  right: 7px;
  top: 5px;
  width: 6px;
  height: 6px;
  border: solid #a0a0a0;
  border-width: 0 1px 1px 0;
  transform: rotate(45deg);
}

.scrub {
  position: relative;
  height: 26px;
  margin: 0 13px;
}

.ruler {
  width: 100%;
  height: 25px;
}

.playhead {
  position: absolute;
  bottom: 1px;
}

.source .playhead {
  clip-path: inset(0 5px 0 0);
}

.zoombar {
  display: flex;
  justify-content: space-between;
  align-items: center;
  height: 14px;
  margin: 0 13px 0 14px;
  background: #2f2f2f;
  border-radius: 7px;
}

.zoombar i, .vbar i, .hbar i {
  width: 11px;
  height: 12px;
  border: 2px solid #999;
  border-radius: 50%;
  background: #232323;
}

.transport {
  display: grid;
  grid-template-columns: auto 1fr;
  align-items: center;
  height: 44px;
  padding: 0 13px 0 82px;
  color: #b0b0b0;
}

.program .transport {
  grid-template-columns: 1fr auto 1fr;
  padding: 0 25px 0 60px;
}

.program .buttons {
  grid-column: 2;
}

.buttons {
  display: flex;
  gap: 8px;
}

.buttons div {
  display: flex;
}

.buttons button {
  width: 35px;
  height: 30px;
}

.extra {
  justify-self: end;
  display: flex;
  gap: 8px;
}

.extra .add {
  margin-top: 5px;
}

.extra button:first-child:not(.add) {
  margin-bottom: 10px;
}

/* project */

.project {
  padding: 0 13px;
}

.project .tabs {
  margin-right: -8px;
}

.project .tab.active {
  margin-left: -2px;
}

.project .tab.active svg {
  margin-left: 2px;
}

.project .tab + .tab {
  margin-left: 23px;
}

.project .tab:nth-child(3), .project .tab.clipped {
  margin-left: 42px;
}

.project .tab.clipped {
  width: 18px;
}

.path {
  display: flex;
  align-items: center;
  gap: 14px;
  height: 42px;
  color: #8c8c8c;
}

.path svg {
  color: #555;
}

.filter {
  display: flex;
  align-items: center;
  margin-right: -2px;
}

.filter span {
  margin-left: auto;
}

.search {
  display: flex;
  align-items: center;
  width: 200px;
  height: 24px;
  padding-left: 5px;
  background: #171717;
  border: 1px solid #2c2c2c;
  border-radius: 2px;
  color: #b0b0b0;
}

.search input {
  flex: 1;
  min-width: 0;
  padding-left: 6px;
}

.filter button {
  margin-left: 17px;
  color: #b0b0b0;
}

.bin {
  position: relative;
  margin-top: 13px;
  padding-right: 12px;
  padding-bottom: 9px;
  background: #1e1e1e;
  border: 1px solid #303030;
}

table {
  width: 100%;
  table-layout: fixed;
  border-collapse: collapse;
}

th, td {
  height: 29px;
  padding: 0 0 0 6px;
  text-align: left;
  font-weight: 400;
  overflow: hidden;
}

th {
  height: 24px;
  padding-left: 5px;
  background: #232323;
  border-right: 1px solid #303030;
  color: #b4b4b4;
}

th.label {
  width: 26px;
}

th.name {
  width: 199px;
}

th.in {
  width: 58px;
}

td {
  border-bottom: 1px solid #2a2a2a;
  font-size: 12px;
}

td.name {
  font-size: 13px;
  padding: 0;
}

td.name div {
  display: flex;
  align-items: center;
  gap: 12px;
  height: 28px;
  padding-left: 27px;
  border: 1px solid transparent;
  white-space: nowrap;
  overflow: hidden;
}

td.name svg {
  color: #b8b8b8;
}

th.in, td.in {
  padding: 0;
}

.in div {
  display: flex;
  justify-content: flex-end;
  width: 20px;
  overflow: hidden;
  white-space: nowrap;
}

th.in div {
  width: 16px;
}

td.in, td.tc {
  color: #3f86d0;
}

.selected td {
  background: #4a4a4a;
}

.selected td.name div {
  border-color: #8c8c8c;
}

.swatch {
  display: block;
  width: 14px;
  height: 17px;
}

.pink {
  background: #e283e2;
}

.green {
  background: #53b757;
}

.blue {
  background: #7299cd;
}

.vthumb, .hthumb {
  position: absolute;
  background: #333;
  border-radius: 5px;
}

.vthumb {
  top: 25px;
  right: 1px;
  width: 10px;
  height: 39px;
}

.hthumb {
  left: 69px;
  bottom: 1px;
  width: 57px;
  height: 12px;
}

.project-tools {
  display: flex;
  align-items: center;
  justify-content: space-between;
  padding: 24px 13px 0 3px;
  color: #b0b0b0;
}

.project-tools .lock {
  color: #25911f;
}

.on {
  color: #3187e0;
}

.dim {
  gap: 14px;
  color: #505050;
}

input[type="range"] {
  appearance: none;
  width: 66px;
  height: 14px;
  background: linear-gradient(#555, #555) center / 100% 2px no-repeat;
}

input[type="range"]::-webkit-slider-thumb {
  appearance: none;
  width: 11px;
  height: 13px;
  border: 2px solid #999;
  border-radius: 50%;
  background: #232323;
}

/* tools */

.tools {
  display: flex;
  flex-direction: column;
  align-items: center;
  gap: 5px;
  padding-top: 21px;
  color: #b0b0b0;
}

.tools button {
  position: relative;
  width: 27px;
  height: 28px;
}

.tools .active {
  color: #3187e0;
  background: #171717;
  border: 1px solid #2c2c2c;
}

.tools .group::after {
  content: "";
  position: absolute;
  right: 1px;
  bottom: 1px;
  border: 2px solid;
  border-color: transparent #888 #888 transparent;
}

/* timeline */

.timeline {
  border: 1px solid #3f86d0;
  padding-bottom: 14px;
}

.close {
  margin: 0 10px 0 9px;
}

.tracks {
  position: relative;
  display: grid;
  grid-template-columns: 236px minmax(0, 1fr) 23px;
}

.track-head, .heads {
  grid-column: 1;
}

.time-ruler, .lanes {
  grid-column: 2;
}

.vbars {
  grid-column: 3;
}

.track-head {
  padding-top: 6px;
}

.track-head .timecode {
  display: block;
  width: auto;
  margin-left: 17px;
  font-size: 17px;
  line-height: 22px;
  color: #3187e0;
}

.switches {
  display: flex;
  gap: 2px;
  margin-left: 12px;
  color: #b0b0b0;
}

.switches button {
  width: 32px;
  height: 27px;
}

.time-ruler {
  position: relative;
  height: 55px;
  overflow: hidden;
}

.time-ruler .ruler {
  position: absolute;
  bottom: 2px;
}

.time-ruler span {
  position: absolute;
  top: 20px;
  transform: translateX(-50%);
  font-size: 12px;
  color: #999;
}

.render {
  position: absolute;
  bottom: 0;
  height: 3px;
  background: #e5de4c;
}

.hover {
  position: absolute;
  top: 2px;
  bottom: 3px;
  border-left: 1px solid #8c8c8c;
}

.head, .lane {
  height: 30px;
  border-bottom: 1px solid #303030;
}

.head.partial, .lane.partial {
  height: 22px;
}

.head.cut, .lane.cut {
  height: 23px;
  border-bottom: 0;
  overflow: hidden;
}

.split {
  height: 6px;
  background: #292929;
  border-bottom: 1px solid #303030;
}

.head {
  display: grid;
  grid-template-columns: 32px 20px 32px 27px 27px 27px 27px;
  grid-auto-rows: 29px;
  place-items: center;
  padding-left: 12px;
  font-size: 12px;
  color: #b0b0b0;
}

.head.partial {
  grid-auto-rows: 14px;
}

.head.partial b {
  height: 14px;
}

.head b {
  display: grid;
  place-items: center;
  width: 32px;
  height: 29px;
  font-weight: 400;
  color: #999;
}

.head b.on {
  background: #0b5588;
  color: #a9bccb;
}

.head button {
  width: 27px;
  height: 29px;
}

.head .muted {
  background: #50eba4;
  color: #1c5c40;
}

.mic {
  color: #505050;
}

.lanes {
  background: #1e1e1e;
  border-left: 1px solid #303030;
}

.lane {
  position: relative;
}

.clip {
  position: absolute;
  top: 0;
  display: flex;
  align-items: flex-start;
  gap: 8px;
  height: 29px;
  padding: 2px 0 0 9px;
  overflow: hidden;
  white-space: nowrap;
  background: #7299cd;
  color: #1b2536;
  font-size: 12px;
  line-height: 16px;
}

.clip em {
  flex: none;
  width: 12px;
  height: 12px;
  margin-top: 3px;
  background: #dcb92c;
  color: #222;
  font-size: 10px;
  font-weight: 500;
  line-height: 12px;
  text-align: center;
}

.clip.pink {
  background: #e283e2;
}

.clip.pink em {
  background: #666;
  color: #111;
}

.clip.sliver, .clip.audio {
  padding: 0;
}

.clip.sliver {
  background: linear-gradient(90deg, #7299cd 3px, #1e1e1e 3px 4px, #7299cd 4px);
}

.clip.audio {
  background: #686a85;
}

.clip.fade::before {
  content: "";
  position: absolute;
  left: 0;
  top: 0;
  border: 3px solid;
  border-color: #ddd transparent transparent #ddd;
}

.vbars {
  display: flex;
  flex-direction: column;
  gap: 9px;
  padding-top: 4px;
}

.vbar {
  display: flex;
  flex-direction: column;
  justify-content: space-between;
  align-items: center;
  flex: 1;
  width: 11px;
  background: #2f2f2f;
  border-radius: 6px;
}

.overlay {
  position: absolute;
  inset: 0 23px 0 237px;
  pointer-events: none;
}

.playline {
  position: absolute;
  top: 38px;
  bottom: 0;
  border-left: 1px solid #3f86d0;
}

.playline svg {
  margin-left: -6px;
}

.cursor {
  position: absolute;
  top: 126px;
}

.hbar {
  height: 15px;
  margin: 0 23px 0 12px;
  border: 1px solid #2a2a2a;
  border-radius: 7px;
  background: #1c1c1c;
}

.hbar div {
  display: flex;
  justify-content: space-between;
  align-items: center;
  height: 13px;
  background: #2f2f2f;
  border-radius: 7px;
}

/* meters */

.meters {
  display: grid;
  grid-template-columns: 40px 40px;
  grid-template-rows: 216px 20px;
  row-gap: 5px;
  padding: 32px 0 0 12px;
}

.meter {
  display: grid;
  grid-template-columns: 1fr 1fr;
  background: linear-gradient(#000, #000) 0 10px / 100% 1px no-repeat, #1e1e1e;
  border: 1px solid #000;
}

.meter i {
  border-bottom: 2px solid #d8cf4a;
  background: linear-gradient(#000, #000) right top / 1px 10px no-repeat;
}

.meter i:last-child {
  background: none;
}

.meter i + i {
  margin-left: 1px;
}

.scale {
  display: flex;
  flex-direction: column;
  padding: 3px 0 0 7px;
  background:
    repeating-linear-gradient(#8c8c8c 0 1px, transparent 1px 40px) 0 13px / 4px 203px no-repeat,
    repeating-linear-gradient(#777 0 1px, transparent 1px 4px) 0 13px / 2px 203px no-repeat;
  font-size: 12px;
}

.scale span {
  flex: none;
  height: 40px;
}

.scale span:last-child {
  height: 18px;
  margin-top: -2px;
}

.solo {
  display: flex;
  gap: 2px;
}

.solo button {
  width: 18px;
  height: 20px;
  border: 1px solid #303030;
  border-radius: 2px;
}

.status {
  display: flex;
  align-items: center;
  gap: 40px;
  height: 20px;
  padding: 0 0 0 2px;
  background: linear-gradient(90deg, transparent calc(100% - 27px), #303030 calc(100% - 27px) calc(100% - 26px), transparent 0), #232323;
  color: #999;
}
```
